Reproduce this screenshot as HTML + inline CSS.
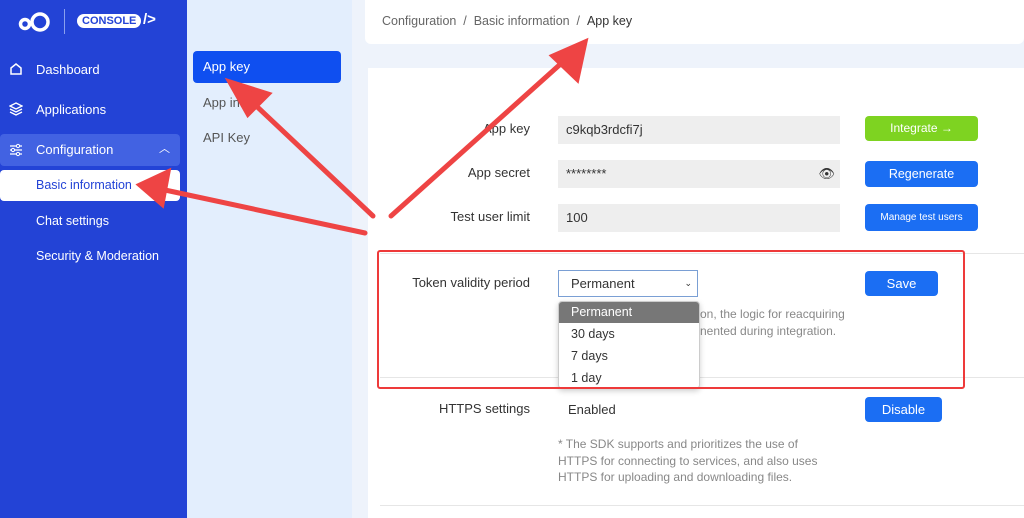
<!DOCTYPE html><html><head><style>
body{margin:0;width:1024px;height:518px;overflow:hidden;font-family:"Liberation Sans",sans-serif;font-size:13px;background:#eef3fb;position:relative}
.a{position:absolute}
.sb{left:0;top:0;width:187px;height:518px;background:#2343d6;color:#fff}
.sb .it{position:absolute;left:36px;font-size:13px}
.c2{left:187px;top:0;width:165px;height:518px;background:#e3eefd}
.lbl{color:#333;text-align:right;width:150px;left:380px}
.inp{background:#eee;height:28px;left:558px;width:282px;line-height:28px;padding-left:8px;box-sizing:border-box;color:#333}
.btn{background:#1b6ef3;color:#fff;border-radius:4px;text-align:center;box-sizing:border-box}
</style></head><body>
<div class="a sb">
 <svg class="a" style="left:16px;top:9px" width="36" height="26"><circle cx="9" cy="15" r="4.5" fill="none" stroke="#fff" stroke-width="3.5"/><circle cx="24" cy="13" r="8" fill="none" stroke="#fff" stroke-width="3.5"/></svg>
 <div class="a" style="left:64px;top:9px;width:1px;height:25px;background:#8aa0ee"></div>
 <div class="a" style="left:77px;top:14px;background:#fff;color:#2343d6;font-weight:bold;font-size:11px;padding:1px 5px;border-radius:7px">CONSOLE</div>
 <div class="a" style="left:143px;top:11px;font-weight:bold;font-size:15px">/&gt;</div>
 <svg class="a" style="left:9px;top:62px" width="14" height="14"><path d="M2 6L7 2L12 6V12H2Z" fill="none" stroke="#fff" stroke-width="1.5"/></svg>
 <div class="it" style="top:62px">Dashboard</div>
 <svg class="a" style="left:9px;top:102px" width="14" height="14"><path d="M7 1L13 4L7 7L1 4Z M1 7L7 10L13 7 M1 10L7 13L13 10" fill="none" stroke="#fff" stroke-width="1.3"/></svg>
 <div class="it" style="top:102px">Applications</div>
 <div class="a" style="left:0;top:134px;width:180px;height:32px;background:#4262e2;border-radius:4px"></div>
 <svg class="a" style="left:9px;top:143px" width="14" height="14"><path d="M1 3H13M1 7H13M1 11H13" stroke="#fff" stroke-width="1.2"/><circle cx="9" cy="3" r="1.6" fill="#4262e2" stroke="#fff"/><circle cx="4" cy="7" r="1.6" fill="#4262e2" stroke="#fff"/><circle cx="9" cy="11" r="1.6" fill="#4262e2" stroke="#fff"/></svg>
 <div class="it" style="top:142px">Configuration</div>
 <div class="a" style="left:159px;top:140px;font-size:11px">︿</div>
 <div class="a" style="left:0;top:170px;width:180px;height:31px;background:#fff;border-radius:4px"></div>
 <div class="it" style="top:178px;color:#2343d6;font-size:12.5px">Basic information</div>
 <div class="it" style="top:214px;font-size:12.5px">Chat settings</div>
 <div class="it" style="top:249px;font-size:12.5px">Security &amp; Moderation</div>
</div>
<div class="a c2">
 <div class="a" style="left:6px;top:51px;width:148px;height:32px;background:#0f4ff0;border-radius:4px;color:#fff;line-height:32px;padding-left:10px;box-sizing:border-box">App key</div>
 <div class="a" style="left:16px;top:95px;color:#555">App info</div>
 <div class="a" style="left:16px;top:130px;color:#555">API Key</div>
</div>
<div class="a" style="left:365px;top:0;width:659px;height:44px;background:#fff;border-radius:0 0 6px 6px;color:#666;line-height:42px;padding-left:17px;box-sizing:border-box;font-size:12.5px">Configuration&nbsp; / &nbsp;Basic information&nbsp; / &nbsp;<span style="color:#333">App key</span></div>
<div class="a" style="left:368px;top:68px;width:656px;height:450px;background:#fff"></div>
<div class="a lbl" style="top:121px">App key</div>
<div class="a inp" style="top:116px">c9kqb3rdcfi7j</div>
<div class="a btn" style="left:865px;top:116px;width:113px;height:25px;line-height:25px;background:#7ed321;font-size:12px">Integrate →</div>
<div class="a lbl" style="top:165px">App secret</div>
<div class="a inp" style="top:160px">********<span style="position:absolute;right:5px">👁</span></div>
<div class="a btn" style="left:865px;top:161px;width:113px;height:26px;line-height:26px;font-size:12.5px">Regenerate</div>
<div class="a lbl" style="top:209px">Test user limit</div>
<div class="a inp" style="top:204px">100</div>
<div class="a btn" style="left:865px;top:204px;width:113px;height:27px;line-height:27px;font-size:10px">Manage test users</div>
<div class="a" style="left:380px;top:253px;width:644px;height:1px;background:#e6e6e6"></div>
<div class="a lbl" style="top:275px">Token validity period</div>
<div class="a" style="left:558px;top:270px;width:140px;height:27px;border:1px solid #7a9fd4;box-sizing:border-box;line-height:25px;padding-left:12px;color:#333">Permanent<span style="position:absolute;right:5px;font-size:9px">⌄</span></div>
<div class="a btn" style="left:865px;top:271px;width:73px;height:25px;line-height:25px">Save</div>
<div class="a" style="left:700px;top:306px;color:#888;line-height:17px;font-size:12px">on, the logic for reacquiring<br>nented during integration.</div>
<div class="a" style="left:380px;top:377px;width:644px;height:1px;background:#e6e6e6"></div>
<div class="a" style="left:558px;top:301px;width:140px;height:86px;background:#fff;border:1px solid #ccc;border-radius:4px;box-shadow:0 2px 6px rgba(0,0,0,.2);color:#333;overflow:hidden;font-size:12.5px">
 <div style="background:#777;color:#fff;height:21px;line-height:21px;padding-left:12px">Permanent</div>
 <div style="height:22px;line-height:22px;padding-left:12px">30 days</div>
 <div style="height:22px;line-height:22px;padding-left:12px">7 days</div>
 <div style="height:22px;line-height:22px;padding-left:12px">1 day</div>
</div>
<div class="a" style="left:377px;top:250px;width:588px;height:139px;border:2px solid #ee3a3a;border-radius:3px;box-sizing:border-box"></div>
<div class="a lbl" style="top:401px">HTTPS settings</div>
<div class="a" style="left:568px;top:402px;color:#333">Enabled</div>
<div class="a btn" style="left:865px;top:397px;width:77px;height:25px;line-height:25px">Disable</div>
<div class="a" style="left:558px;top:436px;color:#888;font-size:12px;line-height:16.5px">* The SDK supports and prioritizes the use of<br>HTTPS for connecting to services, and also uses<br>HTTPS for uploading and downloading files.</div>
<div class="a" style="left:380px;top:505px;width:644px;height:1px;background:#e6e6e6"></div>
<svg class="a" style="left:0;top:0" width="1024" height="518">
<g fill="#ee4444" stroke="#ee4444" stroke-width="5" stroke-linecap="round">
<line x1="373" y1="216" x2="250" y2="100"/><polygon points="230,82 268,94 248,114"/>
<line x1="391" y1="216" x2="565" y2="60"/><polygon points="585,42 577,79 553,56"/>
<line x1="365" y1="233" x2="165" y2="190"/><polygon points="140,185 168,172 162,204"/>
</g></svg>
</body></html>
